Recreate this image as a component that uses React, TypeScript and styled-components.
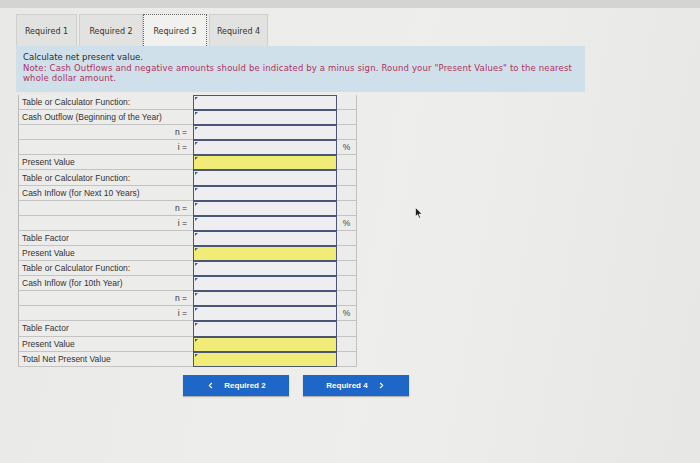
import React from 'react';
import styled, { createGlobalStyle } from 'styled-components';
import { ChevronLeft, ChevronRight } from 'lucide-react';

const GlobalStyle = createGlobalStyle`
  html, body {
    margin: 0;
    padding: 0;
    background: #ebebe9;
  }
  body {
    width: 700px;
    height: 463px;
    overflow: hidden;
    font-family: "DejaVu Sans", Verdana, sans-serif;
  }
`;

const Page = styled.div`
  position: relative;
  width: 700px;
  height: 463px;
  background: linear-gradient(100deg, #e9e9e7 0%, #eeeeec 55%, #e7e7e5 100%);
`;

const TopBand = styled.div`
  height: 8px;
  background: #d4d4d2;
`;

const Content = styled.div`
  padding: 6px 0 0 16px;
`;

const TabRow = styled.div`
  display: flex;
  gap: 2px;
  height: 32px;
`;

const Tab = styled.div<{ $active?: boolean; $w: number }>`
  width: ${p => p.$w}px;
  display: flex;
  align-items: center;
  justify-content: center;
  font-size: 8px;
  color: #333;
  box-sizing: border-box;
  background: ${p => (p.$active ? '#f1f1f0' : '#e2e2e0')};
  border: ${p => (p.$active ? '1px dotted #666' : '1px solid #cfcfcd')};
  border-bottom: none;
  margin-left: ${p => (p.$active ? '-2px' : '0')};
  padding-top: 1px;
`;

const InfoBox = styled.div`
  width: 569px;
  height: 46px;
  box-sizing: border-box;
  background: #cfe0ea;
  padding: 6px 1px 0 7px;
  font-size: 8.5px;
  line-height: 11px;
  color: #2b2b2b;
`;

const Note = styled.div`
  color: #b0325d;
  letter-spacing: 0.15px;
  line-height: 10px;
`;

const Grid = styled.div`
  margin: 3px 0 0 2px;
  display: grid;
  grid-template-columns: 175px 144px 20px;
  grid-auto-rows: 15.1px;
  width: 339px;
  font-family: "Liberation Sans", Arial, sans-serif;
  font-size: 8.5px;
  color: #333;
`;

const LabelCell = styled.div<{ $right?: boolean }>`
  display: flex;
  align-items: center;
  justify-content: ${p => (p.$right ? 'flex-end' : 'flex-start')};
  padding: 0 ${p => (p.$right ? '6px' : '3px')};
  background: #ececea;
  border-bottom: 1px solid #c3c3c1;
  border-left: 1px solid #b9b9b7;
  box-sizing: border-box;
  white-space: nowrap;
`;

const InputCell = styled.div<{ $yellow?: boolean }>`
  position: relative;
  background: ${p => (p.$yellow ? '#f1ec78' : '#eeeef0')};
  border: 1px solid #4b5576;
  box-sizing: border-box;
  &::before {
    content: '';
    position: absolute;
    left: 1px;
    top: 1px;
    border-top: 3px solid #2b5fb8;
    border-right: 3px solid transparent;
  }
`;

const UnitCell = styled.div`
  display: flex;
  align-items: center;
  justify-content: center;
  background: #ececea;
  border-bottom: 1px solid #c3c3c1;
  border-right: 1px solid #c3c3c1;
  box-sizing: border-box;
  color: #444;
`;

const ButtonRow = styled.div`
  display: flex;
  gap: 14px;
  margin: 8px 0 0 167px;
`;

const NavButton = styled.div`
  width: 106px;
  height: 21px;
  display: flex;
  align-items: center;
  justify-content: center;
  gap: 9px;
  background: #1e66c8;
  color: #fff;
  font-family: "Liberation Sans", Arial, sans-serif;
  font-weight: bold;
  font-size: 8px;
  box-shadow: 0 1px 1px rgba(0, 0, 0, 0.25);
`;

const Cursor = styled.svg`
  position: absolute;
  left: 415px;
  top: 207px;
`;

type Row = { label: string; eq?: boolean; pct?: boolean; yellow?: boolean };

const rows: Row[] = [
  { label: 'Table or Calculator Function:' },
  { label: 'Cash Outflow (Beginning of the Year)' },
  { label: 'n =', eq: true },
  { label: 'i =', eq: true, pct: true },
  { label: 'Present Value', yellow: true },
  { label: 'Table or Calculator Function:' },
  { label: 'Cash Inflow (for Next 10 Years)' },
  { label: 'n =', eq: true },
  { label: 'i =', eq: true, pct: true },
  { label: 'Table Factor' },
  { label: 'Present Value', yellow: true },
  { label: 'Table or Calculator Function:' },
  { label: 'Cash Inflow (for 10th Year)' },
  { label: 'n =', eq: true },
  { label: 'i =', eq: true, pct: true },
  { label: 'Table Factor' },
  { label: 'Present Value', yellow: true },
  { label: 'Total Net Present Value', yellow: true },
];

const tabs = [
  { name: 'Required 1', w: 61 },
  { name: 'Required 2', w: 64 },
  { name: 'Required 3', w: 64, active: true },
  { name: 'Required 4', w: 59 },
];

export default function App() {
  return (
    <>
      <GlobalStyle />
      <Page>
        <TopBand />
        <Content>
          <TabRow>
            {tabs.map(t => (
              <Tab key={t.name} $w={t.w} $active={t.active}>
                {t.name}
              </Tab>
            ))}
          </TabRow>
          <InfoBox>
            <div>Calculate net present value.</div>
            <Note>
              Note: Cash Outflows and negative amounts should be indicated by a minus sign. Round your "Present Values" to the nearest
              whole dollar amount.
            </Note>
          </InfoBox>
          <Grid>
            {rows.map((r, i) => (
              <React.Fragment key={i}>
                <LabelCell $right={r.eq}>{r.label}</LabelCell>
                <InputCell $yellow={r.yellow} />
                <UnitCell>{r.pct ? '%' : ''}</UnitCell>
              </React.Fragment>
            ))}
          </Grid>
          <ButtonRow>
            <NavButton>
              <ChevronLeft size={9} strokeWidth={3} />
              <span>Required 2</span>
            </NavButton>
            <NavButton>
              <span>Required 4</span>
              <ChevronRight size={9} strokeWidth={3} />
            </NavButton>
          </ButtonRow>
        </Content>
        <Cursor width="8" height="12" viewBox="0 0 8 12">
          <path d="M0.5 0.5 L0.5 9.5 L2.6 7.6 L4.2 11.2 L5.5 10.6 L4 7.1 L7 7.1 Z" fill="#222" stroke="#fff" strokeWidth="0.6" />
        </Cursor>
      </Page>
    </>
  );
}
